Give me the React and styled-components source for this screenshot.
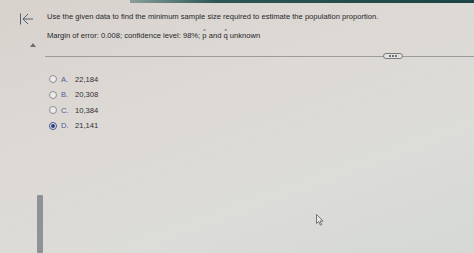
import React from 'react';
import styled, { createGlobalStyle } from 'styled-components';

const GlobalStyle = createGlobalStyle`
  html, body {
    margin: 0;
    padding: 0;
  }
  body {
    width: 474px;
    height: 253px;
    overflow: hidden;
    font-family: "Liberation Sans", Arial, sans-serif;
  }
`;

const Screen = styled.div`
  position: relative;
  width: 474px;
  height: 253px;
  background: linear-gradient(160deg, #d8d2cd 0%, #ddd9d5 40%, #dcdcd9 70%, #d5d8d5 100%);
  display: flex;
  flex-direction: column;
  overflow: hidden;
`;

const TopStrip = styled.div`
  height: 3px;
  margin-left: 130px;
  background: linear-gradient(90deg, #8aa09c 0%, #2c5654 25%, #1c4444 100%);
`;

const Body = styled.div`
  flex: 1;
  display: flex;
`;

const Rail = styled.div`
  width: 45px;
  flex-shrink: 0;
  display: flex;
  flex-direction: column;
  align-items: flex-end;
  padding-top: 10px;
  box-sizing: border-box;
`;

const Back = styled.div`
  width: 20px;
  margin-right: 9px;
  display: flex;
  justify-content: center;
  color: #44525c;
`;

const Caret = styled.div`
  margin-top: 18px;
  margin-right: 9px;
  width: 0;
  height: 0;
  border-left: 3px solid transparent;
  border-right: 3px solid transparent;
  border-bottom: 4px solid #6c6d70;
`;

const ScrollStub = styled.div`
  margin-top: auto;
  margin-right: 2px;
  width: 6px;
  height: 58px;
  background: #8f9294;
  border-radius: 1px 1px 0 0;
`;

const Main = styled.div`
  flex: 1;
  display: flex;
  flex-direction: column;
  padding-top: 9px;
`;

const Question = styled.div`
  padding-left: 2px;
  font-size: 7.6px;
  color: #25262a;
  line-height: 10px;
`;

const Prompt = styled.p`
  margin: 0 0 9px;
`;

const Hat = styled.span`
  position: relative;
  &::before {
    content: '^';
    position: absolute;
    left: 1px;
    top: -5px;
    font-size: 5px;
  }
`;

const Divider = styled.div`
  position: relative;
  margin-top: 6px;
  height: 1px;
  background: #9c9b99;
`;

const More = styled.div`
  position: absolute;
  left: 338px;
  top: -3px;
  width: 20px;
  height: 6px;
  box-sizing: border-box;
  border: 1px solid #7a7b7e;
  border-radius: 3px;
  background: #e4e2df;
  display: flex;
  align-items: center;
  justify-content: center;
  gap: 1.5px;

  span {
    width: 1.5px;
    height: 1.5px;
    background: #5a5b5e;
    border-radius: 50%;
  }
`;

const Options = styled.div`
  display: flex;
  flex-direction: column;
  gap: 5.5px;
  padding-left: 4px;
  margin-top: 17px;
`;

const Option = styled.div`
  display: flex;
  align-items: center;
  height: 10px;
  font-size: 7.6px;
  color: #2f3034;
`;

const Radio = styled.span`
  width: 8px;
  height: 8px;
  box-sizing: border-box;
  border-radius: 50%;
  border: 1px solid ${({ checked }) => (checked ? '#3d5196' : '#8d8f93')};
  background: #ecebea;
  display: flex;
  align-items: center;
  justify-content: center;
  margin-right: 4px;

  &::after {
    content: '';
    width: 4px;
    height: 4px;
    border-radius: 50%;
    background: ${({ checked }) => (checked ? '#2e3f7e' : 'transparent')};
  }
`;

const Letter = styled.span`
  width: 14px;
  color: #4d5d9a;
`;

const Cursor = styled.svg`
  position: absolute;
  left: 316px;
  top: 214px;
`;

const options = [
  { letter: 'A.', value: '22,184' },
  { letter: 'B.', value: '20,308' },
  { letter: 'C.', value: '10,384' },
  { letter: 'D.', value: '21,141', checked: true },
];

const App = () => (
  <Screen>
    <GlobalStyle />
    <TopStrip />
    <Body>
      <Rail>
        <Back>
          <svg width="15" height="12" viewBox="0 0 15 12" fill="none" stroke="currentColor" strokeWidth="0.9">
            <path d="M1.5 0.5v11" />
            <path d="M4 6h10" />
            <path d="M9 1L4 6l5 5" />
          </svg>
        </Back>
        <Caret />
        <ScrollStub />
      </Rail>
      <Main>
        <Question>
          <Prompt>Use the given data to find the minimum sample size required to estimate the population proportion.</Prompt>
          <Prompt>
            Margin of error: 0.008; confidence level: 98%; <Hat>p</Hat> and <Hat>q</Hat> unknown
          </Prompt>
        </Question>
        <Divider>
          <More>
            <span />
            <span />
            <span />
          </More>
        </Divider>
        <Options>
          {options.map((o) => (
            <Option key={o.letter}>
              <Radio checked={o.checked} />
              <Letter>{o.letter}</Letter>
              <span>{o.value}</span>
            </Option>
          ))}
        </Options>
      </Main>
    </Body>
    <Cursor width="8" height="12" viewBox="0 0 8 12" fill="#e8e8e6" stroke="#55585a" strokeWidth="0.8">
      <path d="M0.5 0.5v9l2.2-2 1.6 3.6 1.4-0.6-1.6-3.5h3z" />
    </Cursor>
  </Screen>
);

export default App;
